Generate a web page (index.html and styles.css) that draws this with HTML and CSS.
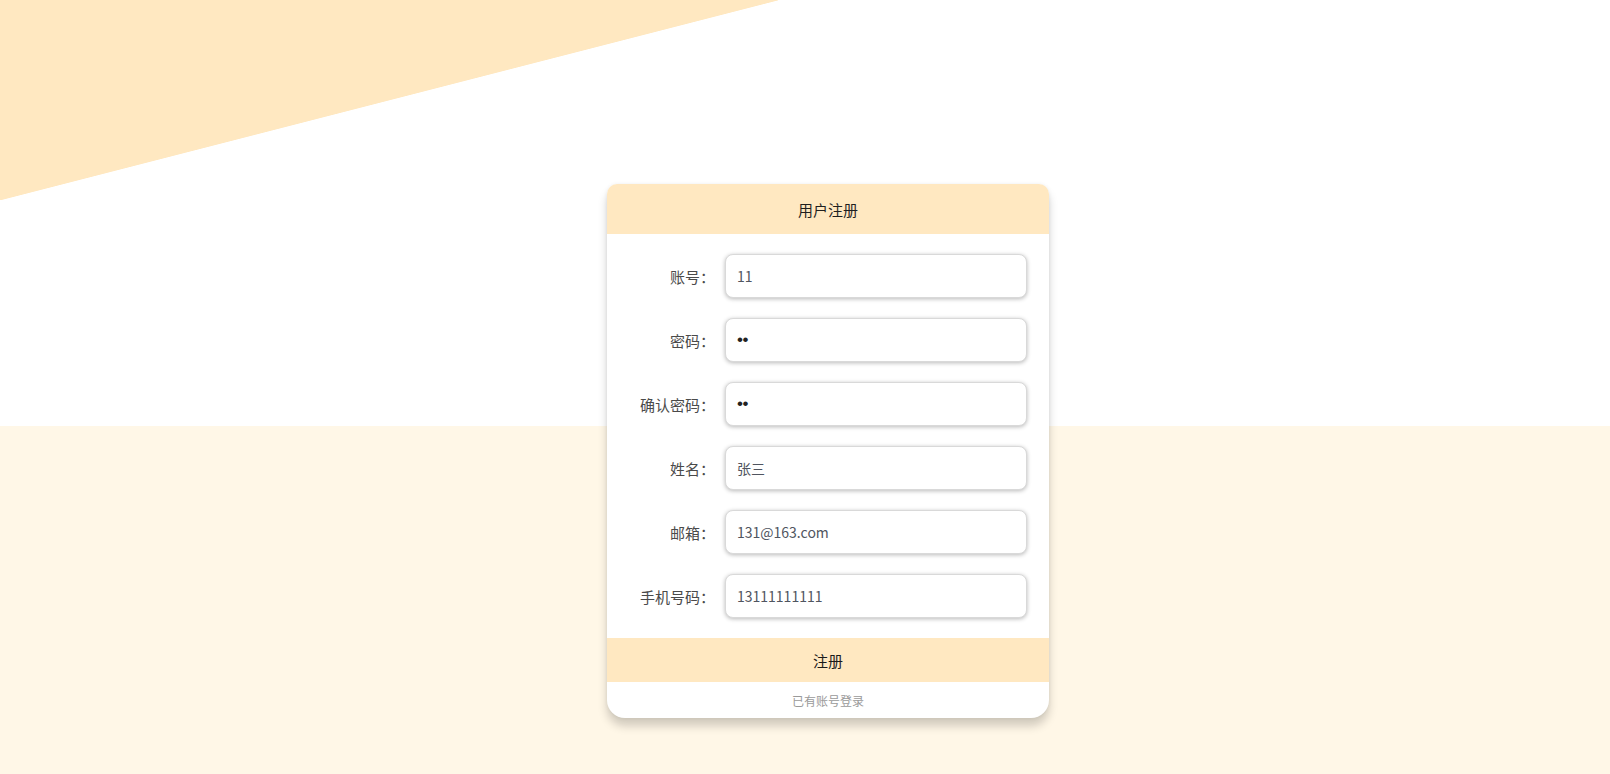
FILE: index.html
```html
<!DOCTYPE html>
<html lang="zh-CN">
<head>
<meta charset="utf-8">
<title>用户注册</title>
<link rel="stylesheet" href="styles.css">
</head>
<body>
<div class="page">
  <div class="card">
    <div class="card-header">用户注册</div>
    <form class="form">
      <div class="row"><label class="label">账号：</label><input class="input" type="text" value="11"></div>
      <div class="row"><label class="label">密码：</label><input class="input input-pwd" type="password" value="11"></div>
      <div class="row"><label class="label">确认密码：</label><input class="input input-pwd" type="password" value="11"></div>
      <div class="row"><label class="label">姓名：</label><input class="input" type="text" value="张三"></div>
      <div class="row"><label class="label">邮箱：</label><input class="input" type="text" value="131@163.com"></div>
      <div class="row"><label class="label">手机号码：</label><input class="input" type="text" value="13111111111"></div>
    </form>
    <div class="submit">注册</div>
    <div class="footer">已有账号登录</div>
  </div>
</div>
</body>
</html>
```

FILE: styles.css
```css
html, body {
  margin: 0;
  padding: 0;
}
body {
  width: 1610px;
  height: 774px;
  overflow: hidden;
  font-family: "Noto Sans CJK SC", "Noto Sans", sans-serif;
  background:
    linear-gradient(to bottom right, #ffe8c1 50%, rgba(255,232,193,0) 50.2%) 0 0 / 778px 200px no-repeat,
    linear-gradient(to bottom, #ffffff 426px, #fff7e7 426px) 0 0 / 100% 100% no-repeat;
}
.page {
  display: flex;
  padding: 184px 0 0 607px;
}
.card {
  width: 442px;
  background: #fff;
  border-radius: 10px 10px 18px 18px;
  box-shadow: 0 8px 10px rgba(0, 0, 0, 0.18), 0 0 4px rgba(0, 0, 0, 0.06);
  overflow: hidden;
}
.card-header {
  height: 50px;
  background: #ffe8c1;
  display: flex;
  align-items: center;
  justify-content: center;
  font-size: 15px;
  color: #1f1f1f;
}
.form {
  display: flex;
  flex-direction: column;
  gap: 20px;
  padding: 20px 22px 20px 0;
  margin: 0;
}
.row {
  display: flex;
  align-items: center;
  height: 44px;
}
.label {
  width: 118px;
  box-sizing: border-box;
  padding-right: 10px;
  text-align: right;
  font-size: 15px;
  color: #4a4a4a;
}
.input {
  flex: 1;
  height: 44px;
  box-sizing: border-box;
  border: 1px solid #d9d9d9;
  border-radius: 8px;
  box-shadow: 0 1px 4px rgba(0, 0, 0, 0.28);
  padding: 0 11px;
  font-family: "Noto Sans CJK SC", "Noto Sans", sans-serif;
  font-size: 14px;
  color: #505560;
  background: #fff;
  outline: none;
}
.input-pwd {
  font-family: "Liberation Sans", "DejaVu Sans", sans-serif;
  font-size: 17px;
  color: #222;
  letter-spacing: -0.5px;
}
.submit {
  height: 44px;
  background: #ffe8c1;
  display: flex;
  align-items: center;
  justify-content: center;
  font-size: 15px;
  color: #1a1a1a;
}
.footer {
  height: 36px;
  display: flex;
  align-items: center;
  justify-content: center;
  font-size: 12px;
  color: #9a9a9a;
}
```
